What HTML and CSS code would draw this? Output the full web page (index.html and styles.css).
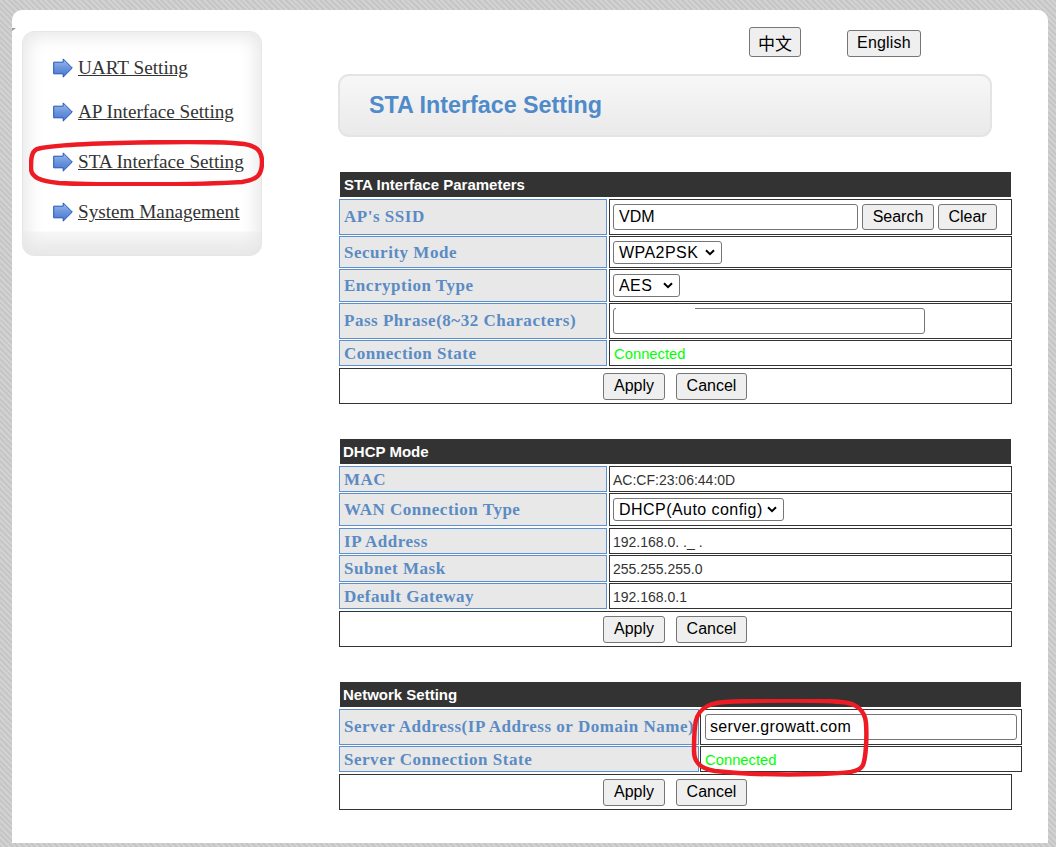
FILE: index.html
```html
<!DOCTYPE html>
<html lang="en">
<head>
<meta charset="utf-8">
<title>STA Interface Setting</title>
<link rel="stylesheet" href="styles.css">
</head>
<body>
<div class="sheet">
  <span class="tick"></span>
  <aside class="sidebar">
    <nav class="menu">
      <a class="menu-item item-uart" href="#"><svg class="arrow" viewBox="0 0 20 20"><use href="#arr"/></svg><span>UART Setting</span></a>
      <a class="menu-item item-ap" href="#"><svg class="arrow" viewBox="0 0 20 20"><use href="#arr"/></svg><span>AP Interface Setting</span></a>
      <a class="menu-item item-sta" href="#"><svg class="arrow" viewBox="0 0 20 20"><use href="#arr"/></svg><span>STA Interface Setting</span></a>
      <a class="menu-item item-sys" href="#"><svg class="arrow" viewBox="0 0 20 20"><use href="#arr"/></svg><span>System Management</span></a>
    </nav>
  </aside>
  <main class="main">
    <div class="lang">
      <button class="btn btn-zh">中文</button>
      <button class="btn btn-en">English</button>
    </div>
    <div class="title"><h1>STA Interface Setting</h1></div>

    <section class="block block-sta">
      <div class="head">STA Interface Parameters</div>
      <div class="row h36"><div class="lab">AP's SSID</div><div class="val"><input class="inp inp-ssid" value="VDM"><button class="btn btn-search">Search</button><button class="btn btn-clear">Clear</button></div></div>
      <div class="row h32"><div class="lab">Security Mode</div><div class="val"><select class="sel sel-sec"><option>WPA2PSK</option></select></div></div>
      <div class="row h33"><div class="lab">Encryption Type</div><div class="val"><select class="sel sel-aes"><option>AES</option></select></div></div>
      <div class="row h36"><div class="lab">Pass Phrase(8~32 Characters)</div><div class="val"><input class="inp inp-pass"><span class="redact"></span></div></div>
      <div class="row h26 gap2"><div class="lab">Connection State</div><div class="val ok">Connected</div></div>
      <div class="actions"><button class="btn btn-apply">Apply</button><button class="btn btn-cancel">Cancel</button></div>
    </section>

    <section class="block block-dhcp">
      <div class="head">DHCP Mode</div>
      <div class="row h26"><div class="lab">MAC</div><div class="val txt">AC:CF:23:06:44:0D</div></div>
      <div class="row h33 gap2"><div class="lab">WAN Connection Type</div><div class="val"><select class="sel sel-wan"><option>DHCP(Auto config)</option></select></div></div>
      <div class="row h26"><div class="lab">IP Address</div><div class="val txt">192.168.0. ._ .</div></div>
      <div class="row h27"><div class="lab">Subnet Mask</div><div class="val txt">255.255.255.0</div></div>
      <div class="row h26 gap2"><div class="lab">Default Gateway</div><div class="val txt">192.168.0.1</div></div>
      <div class="actions"><button class="btn btn-apply">Apply</button><button class="btn btn-cancel">Cancel</button></div>
    </section>

    <section class="block block-net">
      <div class="head wide">Network Setting</div>
      <div class="row net h36"><div class="lab">Server Address(IP Address or Domain Name)</div><div class="val"><input class="inp inp-server" value="server.growatt.com"></div></div>
      <div class="row net h26 gap2"><div class="lab">Server Connection State</div><div class="val ok">Connected</div></div>
      <div class="actions"><button class="btn btn-apply">Apply</button><button class="btn btn-cancel">Cancel</button></div>
    </section>
  </main>
</div>

<svg class="mark mark-sta" viewBox="0 0 236 46" fill="none"><path d="M8 9C30 2 190 0 216 4C228 6 234 10 234 22C234 34 230 40 214 42C170 45 60 45 30 43C12 41 2 38 2 28C2 20 2 12 8 9Z" stroke="#ed1c24" stroke-width="4.500"/></svg>
<svg class="mark mark-net" viewBox="0 0 180 78" fill="none"><path d="M4 28C5 12 14 4 34 3C70 1 130 1 150 3C166 4 174 12 175 24C176 38 175 58 172 66C168 74 155 74 130 75C90 76 50 75 24 72C10 70 3 64 3 52C3 44 3 36 4 28Z" stroke="#ed1c24" stroke-width="4.500"/></svg>

<svg class="defs" width="0" height="0">
  <defs>
    <linearGradient id="ag" x1="0" y1="0" x2="0" y2="1"><stop offset="0" stop-color="#9dbcec"/><stop offset=".5" stop-color="#6a94dc"/><stop offset="1" stop-color="#4a78cc"/></linearGradient>
    <symbol id="arr" viewBox="0 0 20 20"><path d="M.7 4.200H10.200V.9L19.300 10L10.200 19.100V15.800H.7Z" fill="url(#ag)" stroke="#1f55b8" stroke-width="1"/></symbol>
  </defs>
</svg>
</body>
</html>
```
FILE: styles.css
```css
* { box-sizing: border-box; }
html, body { margin: 0; padding: 0; }
body {
  width: 1056px;
  height: 847px;
  overflow: hidden;
  position: relative;
  padding: 10px 8px 4px 12px;
  background: repeating-linear-gradient(45deg, #c6c6c6 0 2px, #d2d2d2 2px 4px);
  font-family: "Liberation Sans", Arial, sans-serif;
}
.sheet {
  height: 100%;
  background: #fff;
  border-radius: 10px 10px 0 0;
  display: grid;
  grid-template-columns: 326px 1fr;
  position: relative;
}
.tick { position: absolute; left: 0; top: 18px; width: 4px; height: 3px; background: #999; clip-path: polygon(0 0, 100% 0, 0 100%); }
.sidebar { padding: 21px 0 0 10px; }
.menu {
  width: 240px;
  height: 225px;
  border-radius: 12px;
  border: 1px solid #e6e6e6;
  background: linear-gradient(#fff 199px, #f7f7f7 200px, #ececec 100%);
  box-shadow: inset 0 0 18px 4px #e6e6e6;
  display: flex;
  flex-direction: column;
  padding: 25px 0 0 30px;
}
.menu-item {
  display: flex;
  align-items: center;
  gap: 5px;
  color: #333;
  font: 19.200px "Liberation Serif", serif;
  height: 22px;
}
.menu-item span { text-decoration: underline; }
.item-ap { margin-top: 22px; }
.item-sta { margin-top: 28px; }
.item-sys { margin-top: 28px; }
.arrow { width: 20px; height: 20px; flex: none; margin-top: -1px; }
.main { padding-top: 17px; }
.lang { display: flex; align-items: flex-end; height: 30px; padding-left: 411px; }
.btn {
  font: 16px "Liberation Sans", Arial, sans-serif;
  color: #000;
  background: #efefef;
  border: 1px solid #767676;
  border-radius: 3px;
  padding: 0;
  height: 27px;
  flex: none;
}
.btn-zh { width: 52px; height: 30px; font-family: "Liberation Sans", "Noto Sans CJK SC", sans-serif; font-size: 17px; }
.btn-en { width: 74px; margin-left: 46px; padding-bottom: 2px; letter-spacing: .2px; }
.title {
  margin-top: 17px;
  width: 654px;
  height: 63px;
  border: 2px solid #e4e4e4;
  border-radius: 11px;
  background: linear-gradient(#f7f7f7, #eaeaea);
  display: flex;
  align-items: center;
  padding-left: 29px;
}
h1 { margin: 0 0 1px; font-size: 23.300px; font-weight: 700; color: #4f8ac9; }
.block { margin-left: 1px; width: 673px; margin-top: 35px; }
.head {
  margin-left: 1px;
  width: 671px;
  height: 25px;
  margin-bottom: 2px;
  background: #333;
  color: #fff;
  font-size: 15px;
  font-weight: 700;
  line-height: 26px;
  padding-left: 4px;
}
.block-dhcp .head, .block-net .head { padding-left: 3px; }
.head.wide { width: 681px; }
.row { display: grid; grid-template-columns: 268px 403px; column-gap: 2px; margin-bottom: 1px; }
.row.net { grid-template-columns: 360px 322px; column-gap: 1px; width: 683px; }
.row.gap2 { margin-bottom: 2px; }
.h26 { height: 26px; } .h27 { height: 27px; } .h32 { height: 32px; } .h33 { height: 33px; } .h36 { height: 36px; }
.lab {
  background: #e8e8e8;
  border: 1px solid #5b90cc;
  color: #5b8bc4;
  font: 700 17px "Liberation Serif", serif;
  letter-spacing: .52px;
  padding-left: 4px;
  display: flex;
  align-items: center;
  white-space: nowrap;
}
.h26 .lab, .h32 .lab, .h26 .txt, .h26 .ok { padding-top: 2px; }
.val {
  border: 1px solid #333;
  display: flex;
  align-items: center;
  padding-left: 3px;
  font-size: 14px;
  color: #333;
  position: relative;
}
.ok { color: #00ff00; padding-left: 4px; font-size: 14.800px; }
.txt { padding-left: 3px; }
.redact { position: absolute; left: 6px; top: 4px; width: 79px; height: 1px; background: #fff; }
.inp {
  font: 16px "Liberation Sans", Arial, sans-serif;
  color: #000;
  background: #fff;
  height: 26px;
  border: 1px solid #767676;
  border-radius: 3px;
  padding: 0 4px 0 5px;
  outline: none;
}
.inp-ssid { width: 245px; }
.inp-pass { width: 312px; }
.inp-server { width: 312px; margin-left: 1px; letter-spacing: .33px; padding-left: 4px; }
.btn-search { width: 72px; height: 26px; margin-left: 4px; }
.btn-clear { width: 59px; height: 26px; margin-left: 4px; }
.sel {
  appearance: none;
  font: 16px "Liberation Sans", Arial, sans-serif;
  letter-spacing: .45px;
  color: #000;
  height: 23px;
  border: 1px solid #767676;
  border-radius: 3px;
  padding: 0 0 0 5px;
  background: #fff url("data:image/svg+xml,%3Csvg xmlns='http://www.w3.org/2000/svg' width='10' height='7'%3E%3Cpath d='M1 1.200L5 5.200L9 1.200' fill='none' stroke='%23000' stroke-width='2'/%3E%3C/svg%3E") no-repeat right 6px center;
}
.sel-sec { width: 109px; }
.sel-aes { width: 67px; }
.sel-wan { width: 171px; }
.actions {
  width: 673px;
  height: 36px;
  border: 1px solid #333;
  display: flex;
  align-items: center;
  padding-left: 263px;
}
.btn-apply { width: 62px; }
.btn-cancel { width: 71px; margin-left: 11px; }
.mark { position: absolute; }
.mark-sta { left: 29px; top: 140px; width: 235px; height: 46px; }
.mark-net { left: 691px; top: 699px; width: 180px; height: 78px; }
.defs { position: absolute; }
```
